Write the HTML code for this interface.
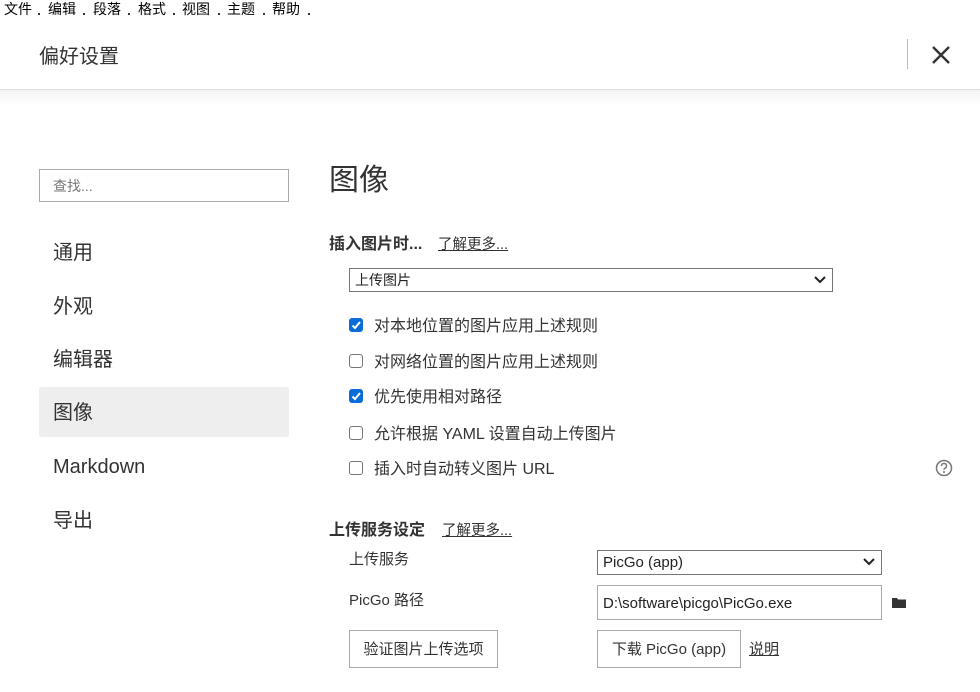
<!DOCTYPE html>
<html><head><meta charset="utf-8"><style>
*{margin:0;padding:0;box-sizing:border-box}
body{width:980px;height:692px;background:#fff;position:relative;overflow:hidden;font-family:"Liberation Sans","Noto Sans CJK SC",sans-serif;color:#333}
.a{position:absolute;white-space:nowrap}
.menu{top:0;height:20px;line-height:18px;font-size:14px;color:#000}
.dot{position:absolute;top:13px;width:2px;height:2px;background:#333}
.nav{left:53px;font-size:20px;line-height:30px;color:#333}
.cb{position:absolute;left:349px;width:14px;height:14px;border:1px solid #767676;border-radius:3px;background:#fff}
.cb.on{background:#0a6cd6;border-color:#0a6cd6}
.lbl{left:374px;font-size:16px;line-height:20px;color:#333}
.box{position:absolute;border:1px solid #aaa;background:#fff}
a{color:#333}
</style></head><body>
<div class="a menu" style="left:4px">文件</div><div class="dot" style="left:38px"></div>
<div class="a menu" style="left:48px">编辑</div><div class="dot" style="left:83px"></div>
<div class="a menu" style="left:93px">段落</div><div class="dot" style="left:128px"></div>
<div class="a menu" style="left:138px">格式</div><div class="dot" style="left:173px"></div>
<div class="a menu" style="left:182px">视图</div><div class="dot" style="left:218px"></div>
<div class="a menu" style="left:227px">主题</div><div class="dot" style="left:263px"></div>
<div class="a menu" style="left:272px">帮助</div><div class="dot" style="left:308px"></div>

<div class="a" style="left:39px;top:43px;font-size:20px;line-height:28px;color:#333">偏好设置</div>
<div style="position:absolute;left:907px;top:39px;width:1px;height:30px;background:#bbb"></div>
<svg style="position:absolute;left:930px;top:44px" width="22" height="22" viewBox="0 0 22 22"><path d="M3 3L19 19M19 3L3 19" stroke="#333" stroke-width="2.4"/></svg>
<div style="position:absolute;left:0;top:89px;width:980px;height:1px;background:#ddd"></div>
<div style="position:absolute;left:0;top:90px;width:980px;height:16px;background:linear-gradient(#f4f4f4,#fff)"></div>

<div class="box" style="left:39px;top:169px;width:250px;height:33px"></div>
<div class="a" style="left:53px;top:177px;font-size:14px;line-height:18px;color:#777">查找...</div>

<div style="position:absolute;left:39px;top:387px;width:250px;height:50px;background:#eee;border-radius:3px"></div>
<div class="a nav" style="top:238px">通用</div>
<div class="a nav" style="top:292px">外观</div>
<div class="a nav" style="top:345px">编辑器</div>
<div class="a nav" style="top:398px">图像</div>
<div class="a nav" style="top:452px">Markdown</div>
<div class="a nav" style="top:506px">导出</div>

<div class="a" style="left:329px;top:161px;font-size:30px;line-height:40px;color:#333">图像</div>

<div class="a" style="left:329px;top:235px;font-size:16px;line-height:20px;font-weight:bold;color:#333">插入图片时...</div>
<div class="a" style="left:438px;top:236px;font-size:14.5px;line-height:18px"><a style="text-decoration:underline">了解更多...</a></div>

<div class="box" style="left:349px;top:268px;width:484px;height:24px;border-color:#767676"></div>
<div class="a" style="left:355px;top:271px;font-size:14px;line-height:18px;color:#222">上传图片</div>
<svg style="position:absolute;left:814px;top:275px" width="12" height="10" viewBox="0 0 12 10"><path d="M1 2L6 7L11 2" stroke="#222" stroke-width="2" fill="none"/></svg>

<div class="cb on" style="top:318px"><svg width="12" height="12" viewBox="0 0 12 12" style="position:absolute;left:0;top:0"><path d="M2.5 6.5L5 9L10 3" stroke="#fff" stroke-width="2" fill="none"/></svg></div>
<div class="a lbl" style="top:317px">对本地位置的图片应用上述规则</div>
<div class="cb" style="top:354px"></div>
<div class="a lbl" style="top:353px">对网络位置的图片应用上述规则</div>
<div class="cb on" style="top:389px"><svg width="12" height="12" viewBox="0 0 12 12" style="position:absolute;left:0;top:0"><path d="M2.5 6.5L5 9L10 3" stroke="#fff" stroke-width="2" fill="none"/></svg></div>
<div class="a lbl" style="top:388px">优先使用相对路径</div>
<div class="cb" style="top:426px"></div>
<div class="a lbl" style="top:425px">允许根据 YAML 设置自动上传图片</div>
<div class="cb" style="top:461px"></div>
<div class="a lbl" style="top:460px">插入时自动转义图片 URL</div>
<svg style="position:absolute;left:935px;top:459px" width="18" height="18" viewBox="0 0 18 18"><circle cx="9" cy="9" r="7.5" stroke="#777" stroke-width="1.5" fill="none"/><path d="M6.5 7a2.5 2.5 0 1 1 3.5 2.2c-.8.4-1 .8-1 1.6" stroke="#777" stroke-width="1.5" fill="none"/><circle cx="9" cy="13" r="1" fill="#777"/></svg>

<div class="a" style="left:329px;top:521px;font-size:16px;line-height:20px;font-weight:bold;color:#333">上传服务设定</div>
<div class="a" style="left:442px;top:522px;font-size:14.5px;line-height:18px"><a style="text-decoration:underline">了解更多...</a></div>

<div class="a" style="left:349px;top:551px;font-size:15px;line-height:18px;color:#333">上传服务</div>
<div class="box" style="left:597px;top:550px;width:285px;height:25px;border-color:#767676"></div>
<div class="a" style="left:603px;top:554px;font-size:15px;line-height:18px;color:#222">PicGo (app)</div>
<svg style="position:absolute;left:863px;top:557px" width="12" height="10" viewBox="0 0 12 10"><path d="M1 2L6 7L11 2" stroke="#222" stroke-width="2" fill="none"/></svg>

<div class="a" style="left:349px;top:592px;font-size:15px;line-height:18px;color:#333">PicGo 路径</div>
<div class="box" style="left:597px;top:585px;width:285px;height:35px"></div>
<div class="a" style="left:603px;top:595px;font-size:15px;line-height:18px;color:#222">D:\software\picgo\PicGo.exe</div>
<svg style="position:absolute;left:892px;top:597px" width="14" height="11" viewBox="0 0 14 11"><path d="M0 1h5l1 1.5h8V11H0z" fill="#333"/></svg>

<div class="box" style="left:349px;top:630px;width:149px;height:38px"></div>
<div class="a" style="left:349px;top:641px;width:149px;text-align:center;font-size:15px;line-height:18px;color:#333">验证图片上传选项</div>
<div class="box" style="left:597px;top:630px;width:144px;height:38px"></div>
<div class="a" style="left:597px;top:641px;width:144px;text-align:center;font-size:15px;line-height:18px;color:#333">下载 PicGo (app)</div>
<div class="a" style="left:749px;top:641px;font-size:15px;line-height:18px"><a style="text-decoration:underline">说明</a></div>
</body></html>
